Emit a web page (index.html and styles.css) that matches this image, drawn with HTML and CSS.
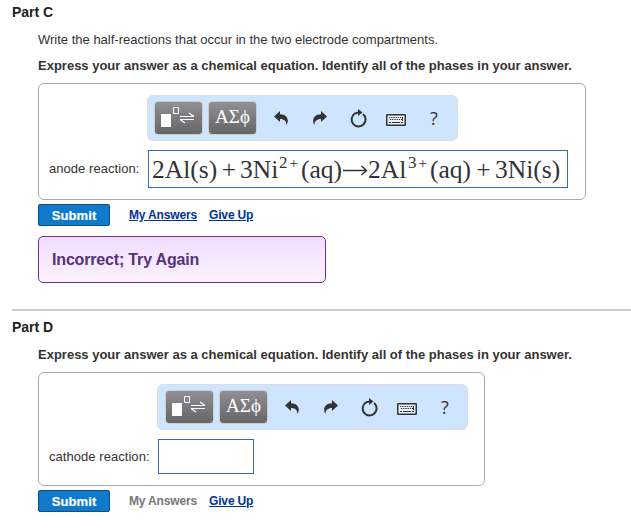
FILE: index.html
```html
<!DOCTYPE html>
<html lang="en">
<head>
  <meta charset="UTF-8">
  <title>Electrochemistry</title>
  <link rel="stylesheet" href="styles.css">
</head>
<body>
  <svg class="sprite" width="0" height="0">
    <symbol id="template" viewBox="0 0 34 22">
      <path d="M0 8h10v13H0z" fill="#fff"/>
      <path d="M12.500 1.500h5v6h-5z" fill="none" stroke="#fff"/>
      <path d="M19 10.500h14M28 7l5 3.500M19 13.500h14M19 13.500l5 3.500" fill="none" stroke="#fff" stroke-width="1.200"/>
    </symbol>
    <symbol id="undo" viewBox="0 0 14 14">
      <path d="M0 5.500L6 0v3.200c5 0 7.800 3 7.800 6.300 0 1.800-.6 3.200-1.500 4.500.3-3.800-2-6-6.300-6v3z"/>
    </symbol>
    <symbol id="redo" viewBox="0 0 14 14">
      <path d="M14 5.500L8 0v3.200C3 3.200.2 6.200.2 9.500c0 1.800.3 3.200 1.200 4.500C1.400 10.200 4 8 8 8v3z"/>
    </symbol>
    <symbol id="reset" viewBox="0 0 17 19">
      <path d="M13 5a7 7 0 1 1-8.500-.2C5.500 4 7 3.500 9.500 3.500" fill="none" stroke="#333" stroke-width="2"/>
      <path d="M8 0l4.500 3.400L8 7z"/>
    </symbol>
    <symbol id="keyboard" viewBox="0 0 20 12">
      <rect x=".75" y=".75" width="18.500" height="10.500" rx=".5" fill="#e8f1fb" stroke="#333" stroke-width="1.500"/>
      <path d="M3 3.500h14M4 5.500h13" stroke="#333" stroke-dasharray="1.300 .9"/>
      <path d="M3 8.500h2M6 8.500h8M15 8.500h2M16.500 3v4" stroke="#333"/>
    </symbol>
  </svg>

  <section class="part">
    <h2>Part C</h2>
    <div class="content">
      <p class="question">Write the half-reactions that occur in the two electrode compartments.</p>
      <p class="instructions">Express your answer as a chemical equation. Identify all of the phases in your answer.</p>
      <div class="answer anode">
        <div class="toolbar">
          <button class="tool template"><svg width="34" height="22"><use href="#template"/></svg></button>
          <button class="tool greek">ΑΣϕ</button>
          <svg class="undo" width="14" height="14"><use href="#undo"/></svg>
          <svg class="redo" width="14" height="14"><use href="#redo"/></svg>
          <svg class="reset" width="17" height="19"><use href="#reset"/></svg>
          <svg class="keyboard" width="20" height="12"><use href="#keyboard"/></svg>
          <span class="help">?</span>
        </div>
        <div class="row">
          <span class="label">anode reaction:</span>
          <div class="field equation">
            <span class="species first">2Al(s)</span><span class="plus">+</span><span class="species ni">3Ni</span><span class="charge">2<i>+</i></span><span class="phase">(aq)</span><svg class="arrow" width="25" height="11" viewBox="0 0 25 11"><path d="M0 5.500h23.500M18.500 1l5 4.500-5 4.500" fill="none" stroke="#333" stroke-width="1.500"/></svg><span class="species al">2Al</span><span class="charge">3<i>+</i></span><span class="phase">(aq)</span><span class="plus">+</span><span class="species">3Ni(s)</span>
          </div>
        </div>
      </div>
      <div class="actions">
        <button class="submit">Submit</button>
        <a href="#" class="answers">My Answers</a>
        <a href="#">Give Up</a>
      </div>
      <div class="feedback">Incorrect; Try Again</div>
    </div>
  </section>

  <section class="part next">
    <h2>Part D</h2>
    <div class="content">
      <p class="instructions">Express your answer as a chemical equation. Identify all of the phases in your answer.</p>
      <div class="answer cathode">
        <div class="toolbar">
          <button class="tool template"><svg width="34" height="22"><use href="#template"/></svg></button>
          <button class="tool greek">ΑΣϕ</button>
          <svg class="undo" width="14" height="14"><use href="#undo"/></svg>
          <svg class="redo" width="14" height="14"><use href="#redo"/></svg>
          <svg class="reset" width="17" height="19"><use href="#reset"/></svg>
          <svg class="keyboard" width="20" height="12"><use href="#keyboard"/></svg>
          <span class="help">?</span>
        </div>
        <div class="row">
          <span class="label">cathode reaction:</span>
          <div class="field"></div>
        </div>
      </div>
      <div class="actions">
        <button class="submit">Submit</button>
        <span class="answers">My Answers</span>
        <a href="#">Give Up</a>
      </div>
    </div>
  </section>
</body>
</html>
```
FILE: styles.css
```css
* {
  box-sizing: border-box;
}
body {
  margin: 0;
  padding: 4px 0 0 12px;
  background: #fff;
  color: #333;
  font-family: "Liberation Sans", Arial, sans-serif;
  font-size: 13px;
  line-height: 16px;
  overflow: hidden;
}
.sprite {
  display: block;
}
h2 {
  margin: 0;
  color: #222;
  font-size: 14px;
  line-height: 16px;
}
.content {
  padding: 12px 0 0 26px;
}
p {
  margin: 0 0 10px;
  white-space: nowrap;
}
.instructions {
  margin-bottom: 9px;
  font-weight: bold;
}
.answer {
  border: 1px solid #aaa;
  border-radius: 6px;
}
.anode {
  width: 548px;
  height: 117px;
  padding: 11px 0 0 10px;
}
.cathode {
  width: 447px;
  height: 114px;
  padding: 11px 0 0 10px;
}
.toolbar {
  display: flex;
  align-items: center;
  width: 311px;
  height: 46px;
  margin-left: 98px;
  padding: 0 0 0 6px;
  border: 1px solid #ddd;
  border-radius: 6px;
  background: #cfe5ff;
  fill: #333;
}
.cathode .toolbar {
  margin-left: 108px;
  padding-left: 7px;
}
.tool {
  display: flex;
  align-items: center;
  justify-content: center;
  width: 49px;
  height: 34px;
  margin-right: 5px;
  padding: 0;
  border: 1px solid #ccc;
  border-radius: 4px;
  background: linear-gradient(#8f8f96, #666);
  color: #fff;
}
.template {
  justify-content: flex-start;
  padding: 0 0 2px 6px;
}
.greek {
  padding-bottom: 2px;
  font-family: "Liberation Serif", serif;
  font-size: 19px;
}
.undo {
  margin-left: 12px;
}
.redo {
  margin-left: 25px;
}
.reset {
  margin-left: 23px;
}
.keyboard {
  margin: 4px 0 0 19px;
}
.help {
  margin-left: 24px;
  font-family: "Open Sans", sans-serif;
  font-size: 18px;
}
.row {
  display: flex;
  align-items: center;
  margin-top: 9px;
}
.label {
  width: 99px;
  letter-spacing: .05px;
  white-space: nowrap;
}
.cathode .label {
  width: 109px;
}
.field {
  width: 96px;
  height: 35px;
  border: 1px solid #36c;
}
.equation {
  display: flex;
  align-items: center;
  width: 420px;
  height: 38px;
  padding: 2px 0 0 3px;
  font-family: "Liberation Serif", "Times New Roman", serif;
  font-size: 25.5px;
  line-height: 34px;
  white-space: nowrap;
}
.plus {
  width: 22px;
  text-align: center;
}
.first {
  width: 66px;
}
.species.ni {
  width: 39px;
}
.species.al {
  width: 40px;
}
.charge {
  width: 22px;
  margin-bottom: 15px;
  font-size: 17px;
  letter-spacing: 2px;
}
.charge i {
  font-size: 15px;
  font-style: normal;
}
.phase {
  width: 42px;
}
.charge + .phase + .plus {
  width: 23px;
}
.actions {
  display: flex;
  align-items: center;
  margin-top: 4px;
  font-size: 12px;
  font-weight: bold;
  letter-spacing: -.15px;
}
.actions a {
  color: #039;
}
.submit {
  width: 72px;
  height: 22px;
  padding: 0;
  border: 1px solid #0a5086;
  border-radius: 2px;
  background: #1079ca;
  color: #fff;
  font: bold 13px "Liberation Sans", Arial, sans-serif;
  letter-spacing: .1px;
  -webkit-text-stroke: .2px #fff;
}
.answers {
  width: 68px;
  margin: 0 12px 0 19px;
  color: #777;
  white-space: nowrap;
}
.feedback {
  width: 288px;
  height: 47px;
  margin-top: 10px;
  padding-left: 13px;
  border: 1px solid #639;
  border-radius: 5px;
  background: linear-gradient(#f1dcff, #fdf2ff);
  color: #537;
  font-size: 16px;
  font-weight: bold;
  letter-spacing: -.17px;
  line-height: 45px;
}
.next {
  margin-top: 26px;
  padding-top: 8px;
  border-top: 2px solid #ccc;
}
```
